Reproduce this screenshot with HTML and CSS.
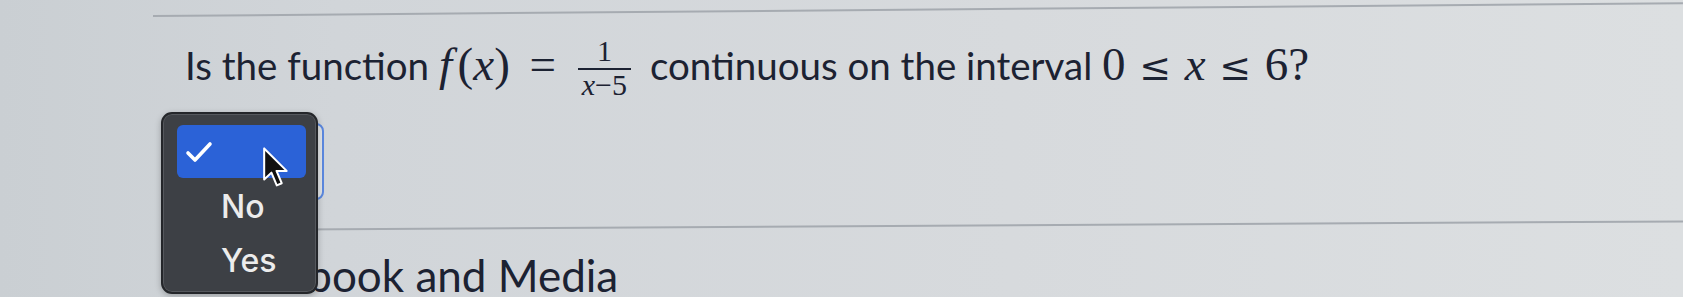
FILE: index.html
```html
<!DOCTYPE html>
<html>
<head>
<meta charset="utf-8">
<link rel="stylesheet" href="styles.css">
</head>
<body>
<div class="frame">
  <div class="rule rule-top"></div>
  <p class="question">Is the function <span class="math"><i>f</i><span class="lp">(</span><i>x</i>)<span class="rel">=</span><span class="frac"><span class="num">1</span><span class="den"><i>x</i>−5</span></span></span> continuous on the interval <span class="math">0<span class="le">≤</span><i>x</i><span class="le">≤</span>6?</span></p>
  <div class="answer">
    <div class="select"></div>
    <div class="menu">
      <div class="item selected">
        <svg class="check" viewBox="0 0 28 22" width="28" height="22"><path d="M3 12 L10 19 L25 3" fill="none" stroke="#fff" stroke-width="3.6" stroke-linecap="round" stroke-linejoin="round"/></svg>
      </div>
      <div class="item">No</div>
      <div class="item">Yes</div>
    </div>
    <svg class="cursor" viewBox="0 0 20 30" width="29" height="44"><path d="M1.5 1.5 L1.5 23 L6.5 18.2 L10.2 27 L13.6 25.5 L10 17 L17 17 Z" fill="#111" stroke="#fff" stroke-width="1.4" stroke-linejoin="round"/></svg>
  </div>
  <div class="rule rule-bottom"></div>
  <h2 class="heading">Textbook and Media</h2>
</div>
</body>
</html>
```
FILE: styles.css
```css
html, body {
  margin: 0;
  padding: 0;
  height: 297px;
  overflow: hidden;
}
body {
  background: linear-gradient(90deg, #cacfd3 0%, #d1d5d9 20%, #d7dadd 60%, #dcdfe1 100%);
  font-family: Lato, "Open Sans", sans-serif;
  color: #1c2232;
}
.rule {
  height: 2px;
  background: #a6abb1;
  transform-origin: left center;
}
.rule-top {
  margin-top: 15px;
  margin-left: 153px;
  transform: rotate(-0.48deg);
}
.question {
  margin: 22px 0 0 185px;
  font-size: 38.5px;
  line-height: 46px;
  white-space: nowrap;
}
.math {
  font-family: "Liberation Serif", "DejaVu Serif", serif;
  font-size: 47px;
  line-height: 40px;
}
.math i {
  font-style: italic;
}
.lp {
  margin-left: 0.12em;
}
.rel {
  margin: 0 0.42em;
}
.le {
  font-family: "DejaVu Serif", serif;
  font-size: 38px;
  margin: 0 0.36em;
}
.frac {
  display: inline-flex;
  flex-direction: column;
  align-items: center;
  vertical-align: 19px;
  font-size: 30px;
  line-height: 24px;
  margin: 0 9px 0 2px;
}
.num {
  align-self: stretch;
  text-align: center;
  padding-bottom: 5px;
  border-bottom: 2px solid #1c2232;
}
.den {
  padding: 3px 4px 0;
}
.answer {
  position: relative;
  z-index: 2;
  height: 132px;
}
.select {
  margin-left: 161px;
  position: relative;
  top: 26px;
  width: 159px;
  height: 73px;
  border: 2px solid #5b88df;
  border-radius: 8px;
  background: #e2e5e7;
}
.menu {
  position: absolute;
  left: 161px;
  top: 15px;
  width: 157px;
  height: 182px;
  background: #3d4045;
  border: 2px solid #24262a;
  border-radius: 11px;
  box-shadow: inset 0 0 0 1px #55585d, 0 2px 6px rgba(0,0,0,0.25);
  padding: 11px 10px 0 14px;
  box-sizing: border-box;
  display: flex;
  flex-direction: column;
  font-family: Inter, "Liberation Sans", sans-serif;
  font-size: 32px;
  font-weight: 500;
  color: #ececec;
}
.item {
  flex: none;
  height: 54px;
  display: flex;
  align-items: center;
  padding-left: 44px;
  border-radius: 6px;
}
.item.selected {
  height: 53px;
  background: #2b62d7;
  padding-left: 8px;
  margin-bottom: 1px;
}
.check {
  display: block;
}
.cursor {
  position: absolute;
  left: 262px;
  top: 49px;
}
.rule-bottom {
  position: relative;
  z-index: 1;
  margin-left: 200px;
  transform: rotate(-0.33deg);
}
.heading {
  margin: 19px 0 0 226px;
  font-size: 44px;
  font-weight: 400;
  line-height: 50px;
  white-space: nowrap;
}
```
